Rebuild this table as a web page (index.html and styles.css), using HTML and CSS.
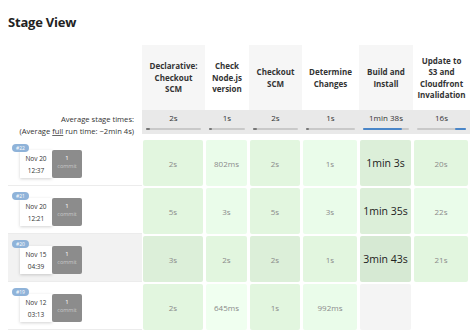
FILE: index.html
```html
<!DOCTYPE html>
<html lang="en">
<head>
  <meta charset="UTF-8" />
  <title>Stage View</title>
  <link rel="stylesheet" href="styles.css">
</head>
<body>

<h2 class="title">Stage View</h2>

<div class="stage-view">
  <!-- Stage headers -->
  <div class="row head-row">
    <div class="corner"></div>
    <div class="stage-head alt">Declarative: Checkout SCM</div>
    <div class="stage-head">Check Node.js version</div>
    <div class="stage-head alt">Checkout SCM</div>
    <div class="stage-head">Determine Changes</div>
    <div class="stage-head alt">Build and Install</div>
    <div class="stage-head">Update to S3 and Cloudfront Invalidation</div>
  </div>

  <!-- Average times -->
  <div class="row avg-row">
    <div class="avg-label">
      <div>Average stage times:</div>
      <div>(Average <u>full</u> run time: ~2min 4s)</div>
    </div>
    <div class="avg-cell">2s<div class="bar"><span class="fill dark" style="left:0;width:4px"></span></div></div>
    <div class="avg-cell">1s<div class="bar"><span class="fill dark" style="left:0;width:3px"></span></div></div>
    <div class="avg-cell">2s<div class="bar"><span class="fill dark" style="left:0;width:4px"></span></div></div>
    <div class="avg-cell">1s<div class="bar"><span class="fill dark" style="left:0;width:3px"></span></div></div>
    <div class="avg-cell">1min 38s<div class="bar"><span class="fill blue" style="left:0;width:84%"></span></div></div>
    <div class="avg-cell">16s<div class="bar"><span class="fill blue" style="left:78%;width:22%"></span></div></div>
  </div>

  <!-- Runs -->
  <div class="row run">
    <div class="run-meta">
      <span class="badge">#22</span>
      <div class="date"><span>Nov 20</span><span>12:37</span></div>
      <div class="commits"><b>1</b><span>commit</span></div>
    </div>
    <div class="cell g2">2s</div>
    <div class="cell g1">802ms</div>
    <div class="cell g2">2s</div>
    <div class="cell g1">1s</div>
    <div class="cell g3 big">1min 3s</div>
    <div class="cell g2">20s</div>
  </div>

  <div class="row run">
    <div class="run-meta">
      <span class="badge">#21</span>
      <div class="date"><span>Nov 20</span><span>12:21</span></div>
      <div class="commits"><b>1</b><span>commit</span></div>
    </div>
    <div class="cell g2">5s</div>
    <div class="cell g1">3s</div>
    <div class="cell g2">5s</div>
    <div class="cell g1">3s</div>
    <div class="cell g3 big">1min 35s</div>
    <div class="cell g1">22s</div>
  </div>

  <div class="row run hl">
    <div class="run-meta">
      <span class="badge">#20</span>
      <div class="date"><span>Nov 15</span><span>04:39</span></div>
      <div class="commits"><b>1</b><span>commit</span></div>
    </div>
    <div class="cell g3">3s</div>
    <div class="cell g2">2s</div>
    <div class="cell g3">2s</div>
    <div class="cell g2">1s</div>
    <div class="cell g4 big">3min 43s</div>
    <div class="cell g2">21s</div>
  </div>

  <div class="row run">
    <div class="run-meta">
      <span class="badge">#19</span>
      <div class="date"><span>Nov 12</span><span>03:13</span></div>
      <div class="commits"><b>1</b><span>commit</span></div>
    </div>
    <div class="cell g2">2s</div>
    <div class="cell g0">645ms</div>
    <div class="cell g2">1s</div>
    <div class="cell g1">992ms</div>
    <div class="cell empty"></div>
    <div class="cell none"></div>
  </div>
</div>

</body>
</html>
```

FILE: styles.css
```css
* { box-sizing: border-box; margin: 0; padding: 0; }

body {
  font-family: 'Open Sans', 'Noto Sans', sans-serif;
  background: #ffffff;
  color: #333;
  width: 474px;
  height: 335px;
  overflow: hidden;
}

.title {
  font-size: 13px;
  font-weight: 700;
  color: #222;
  padding: 13px 0 0 8px;
  height: 45px;
  letter-spacing: -0.2px;
}

.row {
  display: grid;
  grid-template-columns: 142px 63px 44px 53px 57px 54px 57px;
}

/* Header */
.head-row { height: 65px; }

.stage-head {
  display: flex;
  align-items: center;
  justify-content: center;
  text-align: center;
  font-size: 8px;
  font-weight: 700;
  line-height: 11.5px;
  color: #333;
  padding: 0 4px;
  background: #fff;
}

.stage-head.alt { background: #f6f6f6; }

/* Average row */
.avg-row { height: 28px; }

.avg-label {
  text-align: right;
  font-size: 7.6px;
  line-height: 12px;
  color: #333;
  padding: 3px 8px 0 0;
}

.avg-label u { text-decoration-color: #666; }

.avg-cell {
  background: #e9e9e9;
  height: 24px;
  text-align: center;
  font-size: 8px;
  line-height: 10px;
  padding: 3px 4px 0;
  color: #333;
}

.bar {
  position: relative;
  height: 2px;
  margin-top: 5px;
  background: #c9c9c9;
  border-radius: 1px;
}

.fill {
  position: absolute;
  top: 0;
  height: 2px;
  border-radius: 1px;
}

.fill.dark { background: #777; }
.fill.blue { background: #4a86c8; }

/* Runs */
.run { height: 48px; }

.run-meta {
  position: relative;
  margin-left: 8px;
  display: flex;
  align-items: flex-start;
  padding: 12px 0 0 12px;
  border-bottom: 1px solid #ececec;
  background: #fff;
}

.run.hl .run-meta { background: #f2f2f2; }

.badge {
  position: absolute;
  left: 4px;
  top: 6px;
  width: 17px;
  height: 8px;
  border-radius: 4px;
  background: #8fb3d9;
  color: #fff;
  font-size: 5px;
  line-height: 8px;
  text-align: center;
}

.date {
  width: 32px;
  height: 28px;
  background: #fff;
  box-shadow: 0 1px 3px rgba(0,0,0,0.18);
  display: flex;
  flex-direction: column;
  align-items: center;
  justify-content: space-around;
  font-size: 6.5px;
  color: #333;
  padding: 2px 0;
}

.commits {
  width: 30px;
  height: 28px;
  background: #8c8c8c;
  border-radius: 2px;
  display: flex;
  flex-direction: column;
  align-items: center;
  padding-top: 4px;
  color: #fff;
  font-size: 6px;
  line-height: 8px;
}

.commits b { font-weight: 400; }
.commits span { color: #c9c9c9; font-size: 5.5px; }

.cell {
  margin: 2px 2px 0 1px;
  height: 46px;
  border-radius: 2px;
  display: flex;
  align-items: center;
  justify-content: center;
  font-size: 8px;
  color: #8a8a8a;
}

.cell.g0 { background: #f0fff0; }
.cell.g1 { background: #eafcea; }
.cell.g2 { background: #e2f6df; }
.cell.g3 { background: #dcefd9; }
.cell.g4 { background: #d6e9d3; }
.cell.empty { background: #f4f4f4; }
.cell.none { background: #fff; }

.cell.big {
  font-size: 10.5px;
  color: #222;
}
```
